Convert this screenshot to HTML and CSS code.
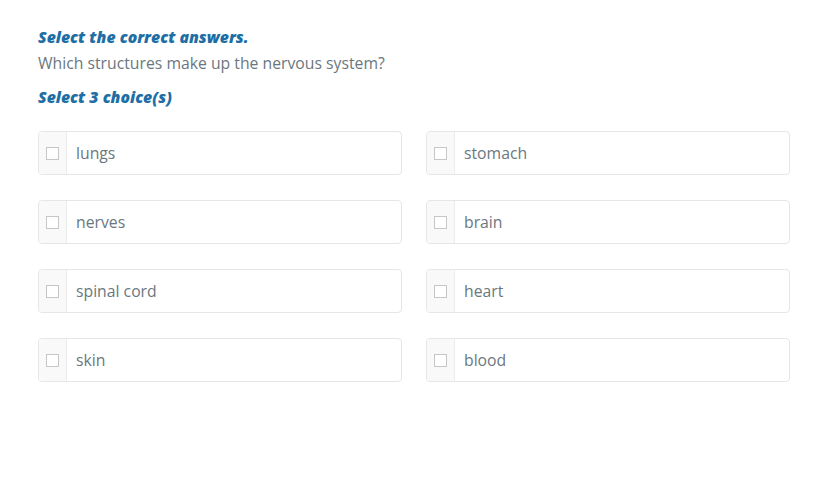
FILE: index.html
```html
<!DOCTYPE html>
<html lang="en">
<head>
<meta charset="UTF-8" />
<title>Question</title>
<link rel="stylesheet" href="styles.css">
</head>
<body>
<main class="question">
  <h2 class="instruction">Select the correct answers.</h2>
  <p class="prompt">Which structures make up the nervous system?</p>
  <h3 class="instruction count">Select 3 choice(s)</h3>

  <div class="choices">
    <label class="choice"><span class="box"><span class="check"></span></span><span class="text">lungs</span></label>
    <label class="choice"><span class="box"><span class="check"></span></span><span class="text">stomach</span></label>
    <label class="choice"><span class="box"><span class="check"></span></span><span class="text">nerves</span></label>
    <label class="choice"><span class="box"><span class="check"></span></span><span class="text">brain</span></label>
    <label class="choice"><span class="box"><span class="check"></span></span><span class="text">spinal cord</span></label>
    <label class="choice"><span class="box"><span class="check"></span></span><span class="text">heart</span></label>
    <label class="choice"><span class="box"><span class="check"></span></span><span class="text">skin</span></label>
    <label class="choice"><span class="box"><span class="check"></span></span><span class="text">blood</span></label>
  </div>
</main>
</body>
</html>
```

FILE: styles.css
```css
body {
  margin: 0;
  font-family: "Open Sans", Lato, sans-serif;
  background: #fff;
  color: #6b7780;
}
.question {
  padding: 26px 31px 0 38px;
}
.instruction {
  margin: 0;
  font-size: 15.8px;
  font-weight: 800;
  font-style: italic;
  color: #1c6ea4;
  line-height: 22px;
}
.prompt {
  margin: 4px 0 0;
  font-size: 15.75px;
  line-height: 22px;
}
.count {
  margin-top: 12px;
}
.choices {
  display: grid;
  grid-template-columns: 1fr 1fr;
  column-gap: 24px;
  row-gap: 25px;
  margin-top: 23px;
}
.choice {
  display: flex;
  height: 44px;
  box-sizing: border-box;
  border: 1px solid #e6e6e6;
  border-radius: 4px;
  overflow: hidden;
  cursor: pointer;
}
.box {
  width: 27px;
  flex: none;
  background: #f9f9f9;
  border-right: 1px solid #ececec;
  display: flex;
  align-items: center;
  justify-content: center;
}
.check {
  width: 11px;
  height: 11px;
  border: 1px solid #c6c6c6;
  background: #fff;
}
.text {
  display: flex;
  align-items: center;
  padding-left: 9px;
  font-size: 15.75px;
}
```
